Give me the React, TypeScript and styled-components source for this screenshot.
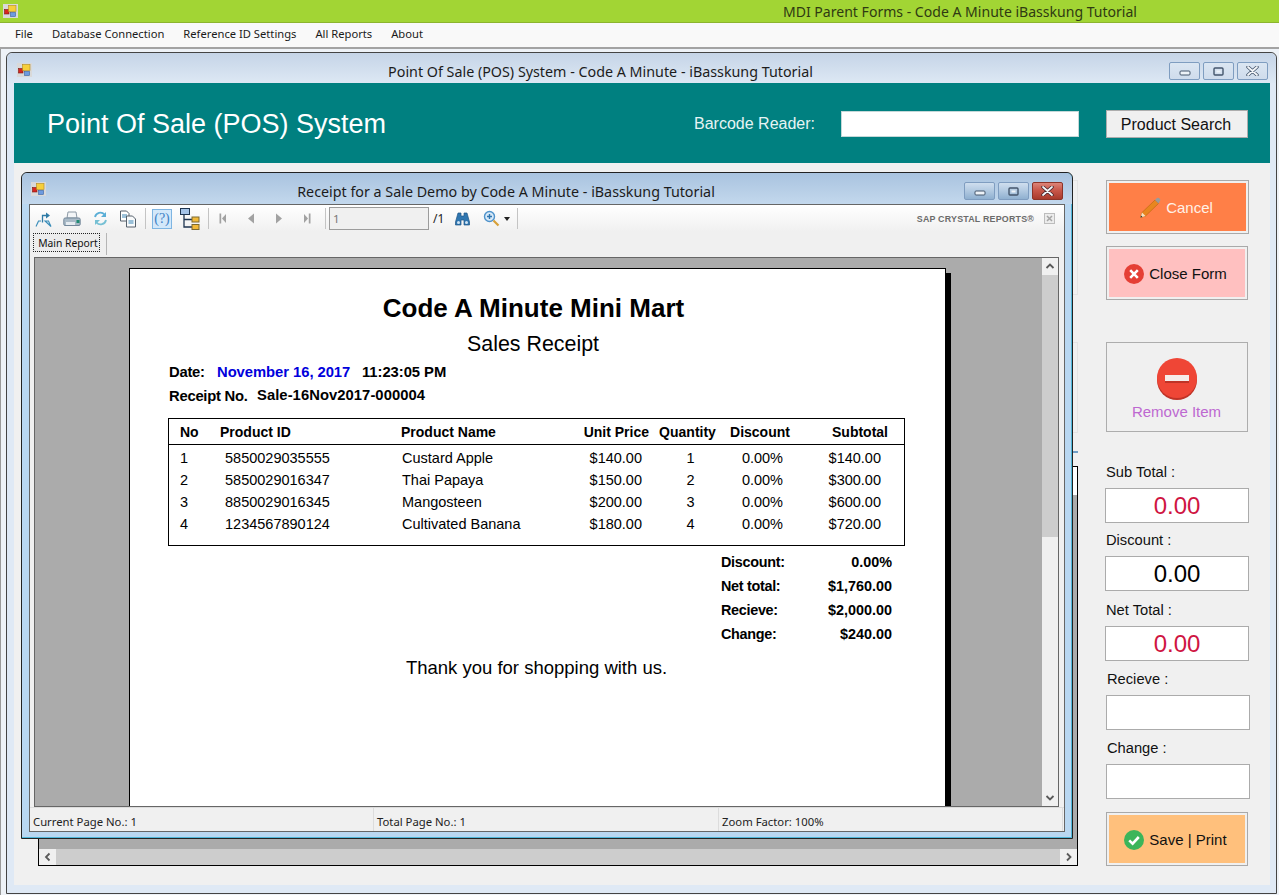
import React from "react";
import styled, { createGlobalStyle } from "styled-components";

const GlobalStyle = createGlobalStyle`
  html, body {
    margin: 0;
    height: 895px;
    overflow: hidden;
    background: #eef2f7;
    font-family: "Liberation Sans", Arial, sans-serif;
  }
`;

const uiFont = `"Noto Sans", "Open Sans", sans-serif`;

const Screen = styled.div`
  width: 1279px;
  height: 895px;
  display: flex;
  flex-direction: column;
  overflow: hidden;
`;

const TitleBar = styled.div`
  height: 22px;
  flex: none;
  background: #a2d534;
  border-bottom: 1px solid #8cb52e;
  display: flex;
  align-items: center;
  justify-content: space-between;
  padding: 0 142px 0 3px;
  font: 14.05px ${uiFont};
  color: #2f3a12;
`;

const MenuBar = styled.div`
  flex: none;
  background: #f9f9f9;
  border-bottom: 2px solid #a3a3a3;
  display: flex;
  align-items: center;
  gap: 19px;
  padding: 0 0 4px 15px;
  height: 20px;
  font: 11.2px ${uiFont};
  color: #1a1a1a;
`;

const MdiArea = styled.div`
  flex: 1;
  min-height: 0;
  display: flex;
  padding: 3px 2px 1px 5px;
  border-left: 1px solid #9a9a9a;
`;

const ChildWindow = styled.div`
  flex: 1;
  display: flex;
  flex-direction: column;
  background: #dfe9f5;
  border: 1px solid #444;
  border-radius: 6px 6px 0 0;
`;

const Caption = styled.div<{ $inner?: boolean }>`
  height: ${(p) => (p.$inner ? 31 : 30)}px;
  box-sizing: border-box;
  flex: none;
  position: relative;
  display: flex;
  align-items: center;
  justify-content: center;
  padding: ${(p) => (p.$inner ? 6 : 7)}px 82px 0 0;
  border-radius: 6px 6px 0 0;
  background: ${(p) =>
    p.$inner ? "linear-gradient(#a9c3df, #c3d8ed)" : "linear-gradient(#c5d4e7, #dde8f4)"};
  font: 14.3px ${uiFont};
  color: #1c1c1c;
`;

const CaptionIcon = styled.span<{ $inner?: boolean }>`
  position: absolute;
  left: ${(p) => (p.$inner ? 9 : 10)}px;
  top: ${(p) => (p.$inner ? 9 : 10)}px;
  display: flex;
`;

const CaptionButtons = styled.div<{ $inner?: boolean }>`
  position: absolute;
  right: ${(p) => (p.$inner ? 9 : 8)}px;
  top: 9px;
  display: flex;
  gap: 3px;
`;

const CaptionButton = styled.span<{ $tone: "pale" | "blue" | "red" }>`
  width: 31px;
  height: 18px;
  box-sizing: border-box;
  display: flex;
  align-items: center;
  justify-content: center;
  border-radius: 2px;
  border: 1px solid ${(p) => (p.$tone === "red" ? "#8c3328" : "#7f9dc0")};
  background: ${(p) =>
    p.$tone === "red"
      ? "linear-gradient(#dc8478 0%, #c9574a 45%, #a83a2c 100%)"
      : p.$tone === "blue"
        ? "linear-gradient(#cfdeee 0%, #b4cbe2 45%, #8fb0d0 100%)"
        : "linear-gradient(#dbe6f2, #cfdcec)"};
`;

const FormBody = styled.div`
  flex: 1;
  min-height: 0;
  margin: 0 6px 8px 7px;
  display: flex;
  flex-direction: column;
  background: #f0f0f0;
`;

const Banner = styled.div`
  height: 80px;
  box-sizing: border-box;
  flex: none;
  display: flex;
  align-items: center;
  padding: 2px 22px 0 33px;
  background: #008080;
  color: #fff;
`;

const BannerTitle = styled.div`
  font-size: 27px;
`;

const BarcodeLabel = styled.div`
  margin-left: auto;
  font-size: 16px;
  color: #e6f4f4;
`;

const BarcodeInput = styled.div`
  width: 238px;
  height: 26px;
  margin: 0 27px 0 26px;
  background: #fff;
  border: 1px solid #c4d8d8;
  box-sizing: border-box;
`;

const SearchButton = styled.div`
  width: 142px;
  height: 28px;
  box-sizing: border-box;
  display: flex;
  align-items: center;
  justify-content: center;
  padding: 1px 2px 0 0;
  background: #f0f0f0;
  border: 1px solid #adadad;
  color: #111;
  font-size: 16px;
`;

const Content = styled.div`
  flex: 1;
  min-height: 0;
  display: grid;
  grid-template-columns: 1091px 146px;
`;

const Workspace = styled.div`
  position: relative;
  display: flex;
  flex-direction: column;
  padding: 17px 0 19px 24px;
  box-sizing: border-box;
  width: 1064px;
`;

const GhostBox = styled.div<{ $h: number; $top: number }>`
  height: ${(p) => p.$h}px;
  margin-top: ${(p) => p.$top}px;
  flex: none;
  border: 1px solid #e4e4e4;
  box-sizing: border-box;
`;

const GhostLine = styled.div`
  height: 2px;
  margin-top: 18px;
  flex: none;
  background: #6f9ec6;
`;

const BackPanel = styled.div`
  flex: 1;
  margin-top: 13px;
  display: flex;
  flex-direction: column;
  border: 1px solid #000;
`;

const BackWhite = styled.div`
  height: 28px;
  background: #fff;
`;

const BackGray = styled.div`
  flex: 1;
  background: #ababab;
`;

const HScroll = styled.div`
  height: 16px;
  flex: none;
  display: flex;
  align-items: center;
  background: #f0f0f0;
`;

const ScrollEnd = styled.span`
  width: 17px;
  flex: none;
  display: flex;
  align-items: center;
  justify-content: center;
`;

const HThumb = styled.div`
  flex: 1;
  height: 100%;
  background: #cdcdcd;
`;

const ReportWindow = styled.div`
  position: absolute;
  left: 7px;
  top: 9px;
  width: 1052px;
  height: 667px;
  box-sizing: border-box;
  display: flex;
  flex-direction: column;
  background: #b9d7f1;
  border: 1px solid #222;
  border-radius: 6px 6px 0 0;
  box-shadow: inset 0 -1px 0 #4fb6d8, inset -1px 0 0 #4fb6d8;
`;

const ReportClient = styled.div`
  flex: 1;
  min-height: 0;
  margin: 0 7px 6px 7px;
  display: flex;
  flex-direction: column;
  background: #f0f0f0;
  border: 1px solid #666;
`;

const Toolbar = styled.div`
  height: 27px;
  flex: none;
  display: flex;
  align-items: center;
  background: linear-gradient(#ffffff, #f0f0f0);
`;

const ToolSlot = styled.span`
  width: 28px;
  flex: none;
  display: flex;
  align-items: center;
  justify-content: center;
`;

const ToolSep = styled.span<{ $left: number; $right?: number }>`
  width: 1px;
  height: 21px;
  flex: none;
  margin: 0 ${(p) => p.$right ?? 0}px 0 ${(p) => p.$left}px;
  background: #c4c4c4;
`;

const HelpButton = styled.span`
  width: 20px;
  height: 20px;
  box-sizing: border-box;
  display: flex;
  align-items: center;
  justify-content: center;
  background: #d3e8fa;
  border: 1px solid #7eb5e2;
  color: #3d80c4;
  font: 14px "Liberation Serif", serif;
`;

const PageInput = styled.div`
  width: 100px;
  height: 23px;
  margin-left: 3px;
  box-sizing: border-box;
  padding-left: 3px;
  background: #f0f0f0;
  border: 1px solid #9c9c9c;
  color: #777;
  font: 11.5px/21px ${uiFont};
`;

const PageTotal = styled.span`
  width: 22px;
  margin-left: 4px;
  font: 12px ${uiFont};
  color: #222;
`;

const ZoomSlot = styled.span`
  width: 34px;
  display: flex;
  align-items: center;
  gap: 4px;
  margin-left: 13px;
`;

const SapBrand = styled.span`
  margin-left: auto;
  font-size: 8.9px;
  font-weight: bold;
  color: #6b6b6b;
  letter-spacing: 0.2px;
`;

const SapClose = styled.span`
  margin: 0 9px 0 10px;
  display: flex;
`;

const TabStrip = styled.div`
  height: 25px;
  flex: none;
  display: flex;
  align-items: flex-start;
  padding-left: 3px;
`;

const TabLabel = styled.div`
  margin-top: 1px;
  height: 19px;
  width: 67px;
  box-sizing: border-box;
  display: flex;
  align-items: center;
  justify-content: center;
  padding-left: 3px;
  background: #ececec;
  border: 1px dotted #222;
  font: 10.3px ${uiFont};
  color: #111;
  white-space: nowrap;
`;

const TabSep = styled.span`
  width: 1px;
  height: 22px;
  margin: 1px 0 0 6px;
  background: #b5b5b5;
`;

const Viewer = styled.div`
  flex: 1;
  min-height: 0;
  margin: 0 5px 0 4px;
  display: flex;
  background: #ababab;
  border: 1px solid #666;
  overflow: hidden;
`;

const SheetArea = styled.div`
  flex: 1;
  min-width: 0;
  padding: 10px 0 0 94px;
  overflow: hidden;
`;

const Sheet = styled.div`
  width: 817px;
  height: 620px;
  padding-top: 24px;
  box-sizing: border-box;
  background: #fff;
  border: 1px solid #000;
  box-shadow: 5px 5px 0 #000;
  color: #000;
`;

const ShopName = styled.div`
  margin-right: 8px;
  text-align: center;
  font-size: 26px;
  line-height: 30px;
  font-weight: bold;
`;

const ReceiptTitle = styled.div`
  margin: 8px 9px 0 0;
  text-align: center;
  font-size: 21.4px;
  line-height: 26px;
`;

const MetaLine = styled.div<{ $first: number }>`
  margin: 6px 0 0 39px;
  display: grid;
  grid-template-columns: ${(p) => p.$first}px auto 1fr;
  font-size: 14.8px;
  line-height: 18px;
  font-weight: bold;
  letter-spacing: -0.05px;
`;

const MetaLabel = styled.span`
  letter-spacing: -0.25px;
`;

const DateText = styled.span`
  width: 145px;
  color: #0000dc;
`;

const SaleNo = styled.span`
  margin-top: -1px;
  letter-spacing: 0.05px;
`;

const ItemsTable = styled.div`
  width: 737px;
  height: 128px;
  margin: 13px 0 0 38px;
  box-sizing: border-box;
  border: 1px solid #000;
`;

const HeadRow = styled.div`
  height: 26px;
  box-sizing: border-box;
  display: grid;
  grid-template-columns: 51px 181px 174px 75px 75px 70px 1fr;
  align-items: center;
  border-bottom: 1px solid #000;
  font-size: 14px;
  font-weight: bold;
`;

const HeadCell = styled.span<{ $right?: number; $left?: number; $align?: string }>`
  padding: 0 ${(p) => p.$right ?? 0}px 0 ${(p) => p.$left ?? 0}px;
  text-align: ${(p) => p.$align ?? "left"};
`;

const ItemRows = styled.div`
  padding-top: 2px;
`;

const ItemRow = styled.div`
  height: 22px;
  display: grid;
  grid-template-columns: 51px 181px 173px 68px 97px 44px 98px;
  align-items: center;
  font-size: 14.5px;
`;

const ItemCell = styled.span<{ $left?: number; $align?: string }>`
  padding-left: ${(p) => p.$left ?? 0}px;
  text-align: ${(p) => p.$align ?? "left"};
`;

const Totals = styled.div`
  width: 171px;
  margin: 4px 0 0 591px;
`;

const TotalRow = styled.div`
  height: 24px;
  display: flex;
  align-items: center;
  justify-content: space-between;
  font-size: 14.4px;
  font-weight: bold;
`;

const TotalLabel = styled.span`
  letter-spacing: -0.3px;
`;

const ThankYou = styled.div`
  margin: 10px 0 0 0;
  padding-right: 2px;
  text-align: center;
  font-size: 18.5px;
  line-height: 24px;
`;

const VScroll = styled.div`
  width: 16px;
  flex: none;
  display: flex;
  flex-direction: column;
  background: #f0f0f0;
`;

const ScrollCap = styled.span`
  height: 17px;
  flex: none;
  display: flex;
  align-items: center;
  justify-content: center;
`;

const VThumb = styled.div`
  height: 262px;
  flex: none;
  background: #cdcdcd;
`;

const VTrack = styled.div`
  flex: 1;
`;

const StatusBar = styled.div`
  height: 24px;
  flex: none;
  display: flex;
  border-top: 1px solid #dcdcdc;
  box-sizing: border-box;
  font: 11.3px/27px ${uiFont};
  color: #222;
`;

const StatusCell = styled.div<{ $w: number }>`
  width: ${(p) => p.$w}px;
  flex: none;
  box-sizing: border-box;
  padding-left: 3px;
  border-right: 1px solid #dcdcdc;
`;

const SideColumn = styled.div`
  display: flex;
  flex-direction: column;
  padding-top: 17px;
  box-sizing: border-box;
  width: 146px;
`;

const ActionButton = styled.div<{ $bg: string; $fg: string; $top: number; $w?: number }>`
  height: 54px;
  width: ${(p) => p.$w ?? 142}px;
  flex: none;
  margin: ${(p) => p.$top}px 0 0 1px;
  box-sizing: border-box;
  display: flex;
  align-items: center;
  justify-content: center;
  gap: 5px;
  padding: 1px 3px 0 0;
  background: ${(p) => p.$bg};
  border: 1px solid #a9a9a9;
  box-shadow: inset 0 0 0 2px #f0f0f0;
  color: ${(p) => p.$fg};
  font-size: 15px;
`;

const RemoveButton = styled.div`
  height: 90px;
  width: 142px;
  flex: none;
  margin: 42px 0 0 1px;
  box-sizing: border-box;
  display: flex;
  flex-direction: column;
  align-items: center;
  padding: 15px 1px 0 0;
  gap: 3px;
  background: #f0f0f0;
  border: 1px solid #adadad;
  color: #bd68d0;
  font-size: 15px;
`;

const FieldLabel = styled.div<{ $top: number; $indent?: number }>`
  height: 18px;
  margin: ${(p) => p.$top}px 0 8px ${(p) => p.$indent ?? 1}px;
  font-size: 14.7px;
  line-height: 20px;
  color: #111;
`;

const AmountBox = styled.div<{ $color?: string; $indent?: number }>`
  height: 35px;
  width: 144px;
  flex: none;
  margin-left: ${(p) => p.$indent ?? 0}px;
  box-sizing: border-box;
  display: flex;
  align-items: center;
  justify-content: center;
  background: #fff;
  border: 1px solid #ababab;
  color: ${(p) => p.$color ?? "#000"};
  font-size: 24px;
`;

const AppIcon = () => (
  <svg width="15" height="14" viewBox="0 0 15 14">
    <rect x="0" y="0" width="15" height="14" fill="#d9d9d9" />
    <rect x="1.5" y="5.5" width="4.5" height="4.5" fill="#d8261f" stroke="#7a1a14" strokeWidth="0.6" />
    <rect x="5.5" y="1.5" width="7.5" height="6" fill="#f6cf3c" stroke="#b48a1c" strokeWidth="0.6" />
    <rect x="7.5" y="8.5" width="5" height="4" fill="#6d9be0" stroke="#38619f" strokeWidth="0.6" />
  </svg>
);

const MinGlyph = () => (
  <svg width="12" height="10" viewBox="0 0 12 10">
    <rect x="1" y="5" width="10" height="4" rx="1" fill="#eef3f8" stroke="#44566c" />
  </svg>
);

const MaxGlyph = () => (
  <svg width="11" height="9" viewBox="0 0 11 9">
    <rect x="1" y="1" width="9" height="7" rx="1" fill="none" stroke="#44566c" strokeWidth="1.4" />
    <rect x="3.5" y="3.5" width="4" height="2" fill="#eef3f8" />
  </svg>
);

const CloseGlyph = ({ white }: { white?: boolean }) => (
  <svg width="13" height="10" viewBox="0 0 13 10">
    <path
      d="M2 1 L11 9 M11 1 L2 9"
      stroke={white ? "#44242a" : "#44566c"}
      strokeWidth="3.4"
      strokeLinecap="round"
    />
    <path d="M2 1 L11 9 M11 1 L2 9" stroke="#f4f6f9" strokeWidth="1.8" strokeLinecap="round" />
  </svg>
);

const ExportIcon = () => (
  <svg width="18" height="18" viewBox="0 0 18 18" fill="none">
    <path d="M1 16.5 L3.5 11 H6 M10 11 H13.5 L16 16.5 Z" stroke="#3a8cb8" fill="#dcecf5" strokeWidth="1.1" />
    <path d="M7.5 12.5 V5.5 H11" stroke="#2f7ba6" strokeWidth="1.3" />
    <path d="M11 2.5 L15 5.5 L11 8.5 Z" fill="#2f7ba6" />
  </svg>
);

const PrintIcon = () => (
  <svg width="18" height="18" viewBox="0 0 18 18">
    <path d="M5 2 H13 L14 8 H4 Z" fill="#f3f5f7" stroke="#8c99a5" />
    <path d="M2 8 H16 Q17.2 8 17.2 9.5 V14 Q17.2 15.5 16 15.5 H2 Q0.8 15.5 0.8 14 V9.5 Q0.8 8 2 8 Z" fill="#a9bac7" stroke="#74889a" />
    <rect x="3" y="12" width="9" height="3" fill="#e6ecf1" />
    <rect x="13.5" y="10" width="3" height="3" fill="#1f8a73" />
  </svg>
);

const RefreshIcon = () => (
  <svg width="15" height="15" viewBox="0 0 15 15" fill="none">
    <path d="M2 6 A5.5 5.5 0 0 1 11.5 3.5" stroke="#5aaed6" strokeWidth="1.8" />
    <path d="M13 1 V6 H8 Z" fill="#5aaed6" />
    <path d="M13 9 A5.5 5.5 0 0 1 3.5 11.5" stroke="#76c0d4" strokeWidth="1.8" />
    <path d="M2 14 V9 H7 Z" fill="#76c0d4" />
  </svg>
);

const CopyIcon = () => (
  <svg width="18" height="18" viewBox="0 0 18 18">
    <path d="M1.5 1 H7.5 L10 3.5 V11 H1.5 Z" fill="#fff" stroke="#56616c" />
    <path d="M3 5 H8 M3 7 H8" stroke="#3a85b5" />
    <path d="M7.5 6 H13.5 L16.5 9 V17 H7.5 Z" fill="#f8fafb" stroke="#56616c" />
    <path d="M9.5 11 H14.5 M9.5 13 H14.5" stroke="#3a85b5" />
  </svg>
);

const TreeIcon = () => (
  <svg width="20" height="22" viewBox="0 0 20 22">
    <path d="M4 6 V19 H12 M4 11.5 H12" stroke="#1f3550" strokeWidth="1.3" fill="none" />
    <rect x="0.5" y="0.5" width="9" height="6" fill="#a5c4e8" stroke="#1f3550" />
    <rect x="12" y="9" width="7" height="5" fill="#f0b93a" stroke="#7c6a30" />
    <rect x="12" y="16.5" width="7" height="5" fill="#f0b93a" stroke="#7c6a30" />
  </svg>
);

const NavIcon = ({ dir, bar }: { dir: "left" | "right"; bar?: boolean }) => (
  <svg width="8" height="11" viewBox="0 0 8 11">
    {dir === "left" ? (
      <path d={bar ? "M7 1 V10 L3 5.5 Z" : "M7 0.5 V10.5 L1 5.5 Z"} fill="#a2a2a2" />
    ) : (
      <path d={bar ? "M1 1 V10 L5 5.5 Z" : "M1 0.5 V10.5 L7 5.5 Z"} fill="#a2a2a2" />
    )}
    {bar && <rect x={dir === "left" ? 0.5 : 5.8} y="0.5" width="1.7" height="10" fill="#a2a2a2" />}
  </svg>
);

const BinocularsIcon = () => (
  <svg width="15" height="14" viewBox="0 0 15 14">
    <path d="M3 1 H6 V4 H9 V1 H12 L14.5 10 V13 H9 V8 H6 V13 H0.5 V10 Z" fill="#2f76b0" stroke="#1f5686" strokeWidth="0.7" />
    <circle cx="3.5" cy="10.5" r="1.5" fill="#cfe4f5" />
    <circle cx="11.5" cy="10.5" r="1.5" fill="#cfe4f5" />
  </svg>
);

const ZoomIcon = () => (
  <svg width="17" height="17" viewBox="0 0 17 17" fill="none">
    <circle cx="6.5" cy="6.5" r="5" fill="#d7e9f8" stroke="#4f93cb" strokeWidth="1.4" />
    <path d="M4 6.5 H9 M6.5 4 V9" stroke="#2f76b0" strokeWidth="1.4" />
    <path d="M10.5 10.5 L15.5 15.5" stroke="#d8a13a" strokeWidth="2.2" />
  </svg>
);

const DropArrow = () => (
  <svg width="6" height="4" viewBox="0 0 6 4">
    <path d="M0 0 H6 L3 4 Z" fill="#222" />
  </svg>
);

const SapCloseIcon = () => (
  <svg width="11" height="11" viewBox="0 0 11 11" fill="none">
    <rect x="0.5" y="0.5" width="10" height="10" fill="#ececec" stroke="#bdbdbd" />
    <path d="M3 3 L8 8 M8 3 L3 8" stroke="#a5a5a5" strokeWidth="1.5" />
  </svg>
);

const Chevron = ({ dir }: { dir: "up" | "down" | "left" | "right" }) => {
  const d = {
    up: "M1.5 6 L5 2.5 L8.5 6",
    down: "M1.5 3 L5 6.5 L8.5 3",
    left: "M6.5 1.5 L3 5 L6.5 8.5",
    right: "M3 1.5 L6.5 5 L3 8.5",
  }[dir];
  return (
    <svg width="10" height="10" viewBox="0 0 10 10" fill="none">
      <path d={d} stroke="#5a5a5a" strokeWidth="1.8" />
    </svg>
  );
};

const PencilIcon = () => (
  <svg width="22" height="22" viewBox="0 0 22 22">
    <path d="M1.5 20.5 L3 15.5 L16 3 L19.5 6.5 L6.5 19 Z" fill="#e8861f" stroke="#b8640f" strokeWidth="0.6" />
    <path d="M16 3 L18 1 Q19 0.3 20 1 L21 2 Q21.7 3 21 4 L19.5 6.5 Z" fill="#9a9a9a" />
    <path d="M1.5 20.5 L3 15.5 L6.5 19 Z" fill="#f6e3c4" />
    <path d="M1.5 20.5 L2.1 18.5 L3.5 19.9 Z" fill="#2a2a2a" />
  </svg>
);

const CloseCircle = () => (
  <svg width="20" height="20" viewBox="0 0 20 20">
    <circle cx="10" cy="10" r="10" fill="#e53f35" />
    <path d="M6.2 6.2 L13.8 13.8 M13.8 6.2 L6.2 13.8" stroke="#fff" strokeWidth="2.6" />
  </svg>
);

const MinusCircle = () => (
  <svg width="40" height="42" viewBox="0 0 40 42">
    <circle cx="20" cy="22" r="20" fill="#bf3327" />
    <circle cx="20" cy="20" r="20" fill="#ef4636" />
    <rect x="8" y="18" width="24" height="7" fill="#bf3327" />
    <rect x="8" y="17" width="24" height="6" fill="#f6ecea" />
  </svg>
);

const CheckCircle = () => (
  <svg width="20" height="20" viewBox="0 0 20 20">
    <circle cx="10" cy="10" r="10" fill="#3cb55a" />
    <path d="M5.2 10.4 L8.6 13.6 L14.8 7" fill="none" stroke="#fff" strokeWidth="2.6" />
  </svg>
);

const menuItems = ["File", "Database Connection", "Reference ID Settings", "All Reports", "About"];

const items = [
  { no: 1, id: "5850029035555", name: "Custard Apple", price: "$140.00", qty: 1, total: "$140.00" },
  { no: 2, id: "5850029016347", name: "Thai Papaya", price: "$150.00", qty: 2, total: "$300.00" },
  { no: 3, id: "8850029016345", name: "Mangosteen", price: "$200.00", qty: 3, total: "$600.00" },
  { no: 4, id: "1234567890124", name: "Cultivated Banana", price: "$180.00", qty: 4, total: "$720.00" },
];

const totals = [
  ["Discount:", "0.00%"],
  ["Net total:", "$1,760.00"],
  ["Recieve:", "$2,000.00"],
  ["Change:", "$240.00"],
];

const ReceiptSheet = () => (
  <Sheet>
    <ShopName>Code A Minute Mini Mart</ShopName>
    <ReceiptTitle>Sales Receipt</ReceiptTitle>
    <MetaLine $first={48}>
      <MetaLabel>Date:</MetaLabel>
      <DateText>November 16, 2017</DateText>
      <span>11:23:05 PM</span>
    </MetaLine>
    <MetaLine $first={88}>
      <MetaLabel>Receipt No.</MetaLabel>
      <SaleNo>Sale-16Nov2017-000004</SaleNo>
    </MetaLine>
    <ItemsTable>
      <HeadRow>
        <HeadCell $left={11}>No</HeadCell>
        <HeadCell>Product ID</HeadCell>
        <HeadCell>Product Name</HeadCell>
        <HeadCell $align="right" $right={1}>Unit Price</HeadCell>
        <HeadCell $align="center">Quantity</HeadCell>
        <HeadCell $align="center">Discount</HeadCell>
        <HeadCell $align="right" $right={16}>Subtotal</HeadCell>
      </HeadRow>
      <ItemRows>
        {items.map((item) => (
          <ItemRow key={item.no}>
            <ItemCell $left={11}>{item.no}</ItemCell>
            <ItemCell $left={5}>{item.id}</ItemCell>
            <ItemCell $left={1}>{item.name}</ItemCell>
            <ItemCell $align="right">{item.price}</ItemCell>
            <ItemCell $align="center">{item.qty}</ItemCell>
            <ItemCell $align="right">0.00%</ItemCell>
            <ItemCell $align="right">{item.total}</ItemCell>
          </ItemRow>
        ))}
      </ItemRows>
    </ItemsTable>
    <Totals>
      {totals.map(([label, value]) => (
        <TotalRow key={label}>
          <TotalLabel>{label}</TotalLabel>
          <span>{value}</span>
        </TotalRow>
      ))}
    </Totals>
    <ThankYou>Thank you for shopping with us.</ThankYou>
  </Sheet>
);

const ReportToolbar = () => (
  <Toolbar>
    <ToolSlot><ExportIcon /></ToolSlot>
    <ToolSlot><PrintIcon /></ToolSlot>
    <ToolSlot><RefreshIcon /></ToolSlot>
    <ToolSlot><CopyIcon /></ToolSlot>
    <ToolSep $left={3} $right={2} />
    <ToolSlot><HelpButton>(?)</HelpButton></ToolSlot>
    <ToolSlot><TreeIcon /></ToolSlot>
    <ToolSep $left={4} />
    <ToolSlot><NavIcon dir="left" bar /></ToolSlot>
    <ToolSlot><NavIcon dir="left" /></ToolSlot>
    <ToolSlot><NavIcon dir="right" /></ToolSlot>
    <ToolSlot><NavIcon dir="right" bar /></ToolSlot>
    <ToolSep $left={4} />
    <PageInput>1</PageInput>
    <PageTotal>/1</PageTotal>
    <BinocularsIcon />
    <ZoomSlot>
      <ZoomIcon />
      <DropArrow />
    </ZoomSlot>
    <ToolSep $left={0} />
    <SapBrand>SAP CRYSTAL REPORTS®</SapBrand>
    <SapClose><SapCloseIcon /></SapClose>
  </Toolbar>
);

const ReportForm = () => (
  <ReportWindow>
    <Caption $inner>
      Receipt for a Sale Demo by Code A Minute - iBasskung Tutorial
      <CaptionIcon $inner><AppIcon /></CaptionIcon>
      <CaptionButtons $inner>
        <CaptionButton $tone="blue"><MinGlyph /></CaptionButton>
        <CaptionButton $tone="blue"><MaxGlyph /></CaptionButton>
        <CaptionButton $tone="red"><CloseGlyph white /></CaptionButton>
      </CaptionButtons>
    </Caption>
    <ReportClient>
      <ReportToolbar />
      <TabStrip>
        <TabLabel>Main Report</TabLabel>
        <TabSep />
      </TabStrip>
      <Viewer>
        <SheetArea>
          <ReceiptSheet />
        </SheetArea>
        <VScroll>
          <ScrollCap><Chevron dir="up" /></ScrollCap>
          <VThumb />
          <VTrack />
          <ScrollCap><Chevron dir="down" /></ScrollCap>
        </VScroll>
      </Viewer>
      <StatusBar>
        <StatusCell $w={344}>Current Page No.: 1</StatusCell>
        <StatusCell $w={345}>Total Page No.: 1</StatusCell>
        <StatusCell $w={344}>Zoom Factor: 100%</StatusCell>
      </StatusBar>
    </ReportClient>
  </ReportWindow>
);

const App = () => (
  <Screen>
    <GlobalStyle />
    <TitleBar>
      <AppIcon />
      <span>MDI Parent Forms - Code A Minute iBasskung Tutorial</span>
    </TitleBar>
    <MenuBar>
      {menuItems.map((item) => (
        <span key={item}>{item}</span>
      ))}
    </MenuBar>
    <MdiArea>
      <ChildWindow>
        <Caption>
          Point Of Sale (POS) System - Code A Minute - iBasskung Tutorial
          <CaptionIcon><AppIcon /></CaptionIcon>
          <CaptionButtons>
            <CaptionButton $tone="pale"><MinGlyph /></CaptionButton>
            <CaptionButton $tone="pale"><MaxGlyph /></CaptionButton>
            <CaptionButton $tone="pale"><CloseGlyph /></CaptionButton>
          </CaptionButtons>
        </Caption>
        <FormBody>
          <Banner>
            <BannerTitle>Point Of Sale (POS) System</BannerTitle>
            <BarcodeLabel>Barcode Reader:</BarcodeLabel>
            <BarcodeInput />
            <SearchButton>Product Search</SearchButton>
          </Banner>
          <Content>
            <Workspace>
              <GhostBox $h={115} $top={0} />
              <GhostBox $h={91} $top={47} />
              <GhostLine />
              <BackPanel>
                <BackWhite />
                <BackGray />
                <HScroll>
                  <ScrollEnd><Chevron dir="left" /></ScrollEnd>
                  <HThumb />
                  <ScrollEnd><Chevron dir="right" /></ScrollEnd>
                </HScroll>
              </BackPanel>
              <ReportForm />
            </Workspace>
            <SideColumn>
              <ActionButton $bg="#ff7f47" $fg="#fff1e8" $top={0} $w={143}>
                <PencilIcon />
                Cancel
              </ActionButton>
              <ActionButton $bg="#ffc0c0" $fg="#111" $top={12}>
                <CloseCircle />
                Close Form
              </ActionButton>
              <RemoveButton>
                <MinusCircle />
                Remove Item
              </RemoveButton>
              <FieldLabel $top={30}>Sub Total :</FieldLabel>
              <AmountBox $color="#cf1542">0.00</AmountBox>
              <FieldLabel $top={7}>Discount :</FieldLabel>
              <AmountBox>0.00</AmountBox>
              <FieldLabel $top={9}>Net Total :</FieldLabel>
              <AmountBox $color="#cf1542">0.00</AmountBox>
              <FieldLabel $top={8} $indent={2}>Recieve :</FieldLabel>
              <AmountBox $indent={1} />
              <FieldLabel $top={8} $indent={2}>Change :</FieldLabel>
              <AmountBox $indent={1} />
              <ActionButton $bg="#ffc07c" $fg="#111" $top={13}>
                <CheckCircle />
                Save | Print
              </ActionButton>
            </SideColumn>
          </Content>
        </FormBody>
      </ChildWindow>
    </MdiArea>
  </Screen>
);

export default App;
